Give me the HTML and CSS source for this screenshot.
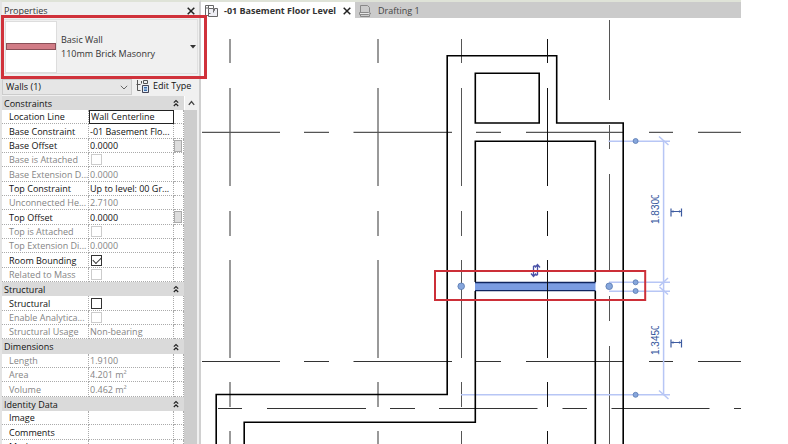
FILE: index.html
```
<!DOCTYPE html>
<html lang="en">
<head>
<meta charset="utf-8">
<title>Basement Floor Level</title>
<link rel="stylesheet" href="styles.css">
</head>
<body>
<div class="app">
  <aside class="panel">
    <header class="panel-head">
      <h1>Properties</h1>
      <button class="icon-btn" aria-label="Close properties"><svg width="8" height="8" viewBox="0 0 8 8"><path d="M.7.7l6.6 6.6M7.3.7L.7 7.3" stroke="#222" stroke-width="1.5"/></svg></button>
    </header>
    <div class="type-wrap">
      <button class="type">
        <span class="thumb"><span class="brick"></span></span>
        <span class="type-text"><span>Basic Wall</span><span>110mm Brick Masonry</span></span>
        <svg width="6" height="4" viewBox="0 0 6 4"><path d="M0 0h6L3 3.6z" fill="#333"/></svg>
      </button>
      <div class="highlight"></div>
    </div>
    <div class="filter">
      <div class="select-box">
        <select aria-label="Category"><option>Walls (1)</option></select>
        <svg width="8" height="5" viewBox="0 0 8 5"><path d="M.8.8L4 4 7.200.8" fill="none" stroke="#666"/></svg>
      </div>
      <button class="edit-type"><svg width="13" height="13" viewBox="0 0 13 13" fill="none" stroke="#555"><path d="M1.500 0v10.500h3M.5 4.500h4M5.500 1v2.500M7.500.5h4v3h-4z"/><path d="M6.500 5.500h6v7h-6z" fill="#dce8f5" stroke="#445"/><path d="M8 7.500h3M8 9h3M8 10.500h3" stroke="#3c6fae"/></svg>Edit Type</button>
    </div>
    <div class="props">
      <table>
        <colgroup><col class="c-name"><col class="c-value"><col class="c-more"></colgroup>
        <tbody>
        <tr class="group"><th colspan="3"><div>Constraints<svg class="fold" viewBox="0 0 6 8"><path d="M.8 3.700L3 1.500l2.200 2.200M.8 7L3 4.800 5.200 7"/></svg></div></th></tr>
        <tr><th><label for="p1">Location Line</label></th><td class="focus"><input id="p1" value="Wall Centerline"></td><td></td></tr>
        <tr><th><label for="p2">Base Constraint</label></th><td><input id="p2" value="-01 Basement Flo..."></td><td></td></tr>
        <tr><th><label for="p3">Base Offset</label></th><td><input id="p3" value="0.0000"></td><td><button class="more" aria-label="Associate base offset"></button></td></tr>
        <tr class="off"><th><label for="p4">Base is Attached</label></th><td><input id="p4" type="checkbox" disabled></td><td></td></tr>
        <tr class="off"><th><label for="p5">Base Extension D...</label></th><td><input id="p5" value="0.0000" disabled></td><td></td></tr>
        <tr><th><label for="p6">Top Constraint</label></th><td><input id="p6" value="Up to level: 00 Gr..."></td><td></td></tr>
        <tr class="off"><th><label for="p7">Unconnected He...</label></th><td><input id="p7" value="2.7100" disabled></td><td></td></tr>
        <tr><th><label for="p8">Top Offset</label></th><td><input id="p8" value="0.0000"></td><td><button class="more" aria-label="Associate top offset"></button></td></tr>
        <tr class="off"><th><label for="p9">Top is Attached</label></th><td><input id="p9" type="checkbox" disabled></td><td></td></tr>
        <tr class="off"><th><label for="p10">Top Extension Di...</label></th><td><input id="p10" value="0.0000" disabled></td><td></td></tr>
        <tr><th><label for="p11">Room Bounding</label></th><td><input id="p11" type="checkbox" checked></td><td></td></tr>
        <tr class="off"><th><label for="p12">Related to Mass</label></th><td><input id="p12" type="checkbox" disabled></td><td></td></tr>
        <tr class="group"><th colspan="3"><div>Structural<svg class="fold" viewBox="0 0 6 8"><path d="M.8 3.700L3 1.500l2.200 2.200M.8 7L3 4.800 5.200 7"/></svg></div></th></tr>
        <tr><th><label for="p13">Structural</label></th><td><input id="p13" type="checkbox"></td><td></td></tr>
        <tr class="off"><th><label for="p14">Enable Analytica...</label></th><td><input id="p14" type="checkbox" disabled></td><td></td></tr>
        <tr class="off"><th><label for="p15">Structural Usage</label></th><td><input id="p15" value="Non-bearing" disabled></td><td></td></tr>
        <tr class="group"><th colspan="3"><div>Dimensions<svg class="fold" viewBox="0 0 6 8"><path d="M.8 3.700L3 1.500l2.200 2.200M.8 7L3 4.800 5.200 7"/></svg></div></th></tr>
        <tr class="off"><th><label for="p16">Length</label></th><td><input id="p16" value="1.9100" disabled></td><td></td></tr>
        <tr class="off"><th><label for="p17">Area</label></th><td><input id="p17" value="4.201 m²" disabled></td><td></td></tr>
        <tr class="off"><th><label for="p18">Volume</label></th><td><input id="p18" value="0.462 m²" disabled></td><td></td></tr>
        <tr class="group"><th colspan="3"><div>Identity Data<svg class="fold" viewBox="0 0 6 8"><path d="M.8 3.700L3 1.500l2.200 2.200M.8 7L3 4.800 5.200 7"/></svg></div></th></tr>
        <tr><th><label for="p19">Image</label></th><td><input id="p19"></td><td></td></tr>
        <tr><th><label for="p20">Comments</label></th><td><input id="p20"></td><td></td></tr>
        <tr><th><label for="p21">Mark</label></th><td><input id="p21"></td><td></td></tr>
        </tbody>
      </table>
      <div class="scroll">
        <button class="icon-btn" aria-label="Scroll up"><svg width="7" height="6" viewBox="0 0 7 6"><path d="M.8 4.800L3.500 1.500l2.700 3.300" fill="none" stroke="#444" stroke-width="1.300"/></svg></button>
        <div class="thumb-bar"></div>
      </div>
    </div>
  </aside>
  <main class="view">
    <nav class="tabs">
      <a class="tab active" href="#plan"><svg width="13" height="12" viewBox="0 0 13 12" fill="none" stroke="#666"><path d="M3.500 10.500h-3v-10h8v3M.5 3h3M3.500.5v3"/><path d="M3.500 3.500h5v2h1v-2h3v8h-9z" fill="#eeeef4"/><path d="M8.500 5.500v2M3.500 8.500h2"/></svg><span>-01 Basement Floor Level</span></a>
      <button class="icon-btn" aria-label="Close tab"><svg width="8" height="8" viewBox="0 0 8 8"><path d="M.7.7l6.600 6.600M7.300.7L.7 7.300" stroke="#222" stroke-width="1.500"/></svg></button>
      <a class="tab" href="#drafting"><svg width="13" height="12" viewBox="0 0 13 12" fill="none" stroke="#888"><path d="M1.500 7V.5h7l2 2V7M1.500 9v2.500h9V10"/><path d="M.5 7.500h9l2.500 1-2.500 1h-9z" fill="#e6e6e6"/></svg><span>Drafting 1</span></a>
    </nav>
    <svg class="plan" viewBox="201 19 587 425" preserveAspectRatio="xMinYMin meet" role="img" aria-label="Basement floor plan">
      <defs>
        <clipPath id="dimA"><rect x="645" y="195" width="20" height="40"/></clipPath>
        <clipPath id="dimB"><rect x="645" y="326" width="20" height="40"/></clipPath>
        <path id="grid-v" d="M0 39V63M0 88V186M0 211V236M0 260V358M0 382V407M0 431V444"/>
        <path id="grid-h" d="M202 0H280M304 0H329M353.500 0H452M476 0H501M526 0H623M649 0H673M698 0H741"/>
        <path id="dim-mark" d="M671 208.500V216.500M681.500 208.500V216.500M671 211.500H681.500M673 210.500v2M679.500 210.500v2"/>
      </defs>
      <g fill="none">
        <g stroke="#999" stroke-width="2"><use href="#grid-v" x="230"/><use href="#grid-v" x="378"/></g>
        <g stroke="#555"><use href="#grid-v" x="461.500"/><path d="M609.500 20V100M609.500 125V149M609.500 174V271M609.500 296V321M609.500 346V444"/></g>
        <g stroke="#333"><use href="#grid-h" y="361.500"/><path d="M218 408.500H242M267 408.500H366M390 408.500H415M439 408.500H537.500M562.500 408.500H587M611.500 408.500H709.500M734 408.500H741"/></g>
        <use href="#grid-h" y="132.300" stroke="#555" stroke-width="1.300"/>
        <path d="M475 282h120.500v9H475z" fill="#7b9ce2"/>
        <g stroke="#b7c6f5" stroke-width="1.500"><path d="M608.500 141.200H670M609 282.300H670M609 291.200H670M461 394.800H670M663.600 141V395"/><path d="M659 136.500l9.500 8.500M659.500 286l8.500-8M659.500 287l8.500 7.500M659 390.500l9.500 8.500"/></g>
        <g stroke="#000" stroke-width="1.600"><path d="M216.200 444V394.500H447.200V55.800H556.700V123H623.200V444"/><path d="M475.300 73.300H539.200V123H475.300z"/><path d="M475.300 282V141.300H595.300V282M475.300 291V422.300H244.200V444M595.300 291V444"/></g>
        <path d="M475 282.500H595.500M475 290.700H595.500" stroke="#10255f" stroke-width="1.300"/>
        <use href="#grid-v" x="547.500" stroke="#111"/>
        <g fill="#86a6dc" stroke="#5878b0" stroke-width=".8"><circle cx="461.200" cy="286.300" r="3.300"/><circle cx="609.200" cy="286.300" r="3.300"/><circle cx="635.600" cy="141" r="2.500"/><circle cx="635.600" cy="282.300" r="2.500"/><circle cx="635.600" cy="291" r="2.500"/><circle cx="635.600" cy="394.800" r="2.500"/></g>
        <g stroke="#3d5ba0" stroke-width="1.200"><use href="#dim-mark"/><use href="#dim-mark" y="131"/></g>
        <path d="M533.500 266V276.500M531 273.500l2.500 3 2.500-3M537.500 275V264.500M535 267.500l2.500-3 2.500 3M533.500 266h2M535.500 275h2" stroke="#4a52a8" stroke-width="1.300"/>
        <path d="M435 271H645.200V300H435z" stroke="#cc2f38" stroke-width="2"/>
      </g>
      <g class="dim-text">
        <g clip-path="url(#dimA)"><text transform="translate(659 224) rotate(-90)">1.8300</text></g>
        <g clip-path="url(#dimB)"><text transform="translate(659 355) rotate(-90)">1.3450</text></g>
      </g>
    </svg>
  </main>
</div>
</body>
</html>
```
FILE: styles.css
```
* { box-sizing: border-box; }
body {
  margin: 0;
  background: #fff;
  color: #111;
  font: 9px/14px "Open Sans", "Noto Sans", sans-serif;
}
button, input, select { font: inherit; color: inherit; margin: 0; padding: 0; border: 0; background: none; }
svg { flex: none; }
.app { display: flex; height: 100vh; overflow: hidden; }

.panel {
  display: flex;
  flex-direction: column;
  width: 201px;
  flex: none;
  background: #f0f0f0;
  border-top: 2px solid #dfe3d8;
  border-left: 2px solid #e4e4e4;
  border-right: 2px solid #d0d0d0;
}
.panel-head { display: flex; align-items: center; justify-content: space-between; height: 16px; padding: 2px 4px 0 2px; }
h1 { margin: 0; font: inherit; color: #333; }
.icon-btn { display: flex; align-items: center; justify-content: center; }
.type-wrap { position: relative; height: 61px; padding: 1px 1px 5px 1px; }
.type {
  display: flex;
  align-items: center;
  gap: 4px;
  width: 100%;
  height: 55px;
  padding: 0 1px;
  border: 1px solid #e0e0e0;
  color: #333;
  text-align: left;
}
.thumb { display: flex; align-items: center; width: 52px; height: 52px; background: #fff; border: 1px solid #ddd; }
.brick { width: 100%; height: 7px; background: #d17c86; border: 1px solid #8a5058; }
.type-text { display: flex; flex-direction: column; flex: 1; white-space: nowrap; }
.highlight { position: absolute; top: -3px; left: -1px; right: -8px; bottom: 0; border: 3px solid #d0323b; pointer-events: none; z-index: 1; }

.filter { display: flex; align-items: flex-start; height: 17px; gap: 4px; }
.select-box { position: relative; width: 130px; height: 16px; background: #e6e6e6; border: 1px solid #ccc; }
.select-box select { display: block; appearance: none; width: 100%; height: 14px; padding-left: 3px; line-height: 14px; }
.select-box svg { position: absolute; right: 3px; top: 5px; pointer-events: none; }
.edit-type { display: flex; align-items: center; gap: 4px; white-space: nowrap; }

.props { display: flex; flex: 1; min-height: 0; overflow: hidden; align-items: flex-start; }
table { width: 182px; flex: none; table-layout: fixed; border-collapse: separate; border-spacing: 0; background: #fff; }
.c-name { width: 87px; }
.c-value { width: 85px; }
.c-more { width: 10px; }
tr { height: 14px; }
tr:nth-child(3n) { height: 15px; }
th, td { height: inherit; padding: 0; border-right: 1px dotted #aaa; border-bottom: 1px dotted #aaa; font-weight: normal; text-align: left; white-space: nowrap; line-height: 13px; overflow: hidden; }
th { padding-left: 7px; }
th label, td input, td button { display: block; }
td input { width: 100%; height: 13px; padding-left: 1px; line-height: 13px; }
.off { color: #858585; }
.group th { padding: 0 5px 0 2px; background: #dadada; border: 0; }
.group div { display: flex; align-items: center; justify-content: space-between; }
.fold { width: 6px; height: 8px; fill: none; stroke: #222; stroke-width: 1.200; }
.focus { border: 1px solid #222; }
.focus input { height: 12px; line-height: 12px; }
input[type="checkbox"] { appearance: none; width: 11px; height: 11px; margin-left: 2px; padding: 0; border: 1px solid #333; background: #fff; }
input[type="checkbox"]:disabled { border-color: #ccc; }
input[type="checkbox"]:checked::after { content: ""; display: block; width: 7px; height: 4px; margin: 1px; border: solid #333; border-width: 0 0 1px 1px; transform: rotate(-45deg); }
.more { width: 8px; height: 12px; background: #ddd; border: 1px solid #aaa; }
.scroll { display: flex; flex-direction: column; flex: 1; align-self: stretch; padding-right: 2px; }
.scroll .icon-btn { height: 14px; border-left: 1px solid #fff; }
.thumb-bar { flex: 1; background: #cdcdcd; }

.view { display: flex; flex-direction: column; flex: 1; min-width: 0; }
.tabs { display: flex; height: 19px; margin-right: 47px; background: #cbcbcb; border-top: 2px solid #dfe3d8; border-bottom: 1px solid #fff; }
.tabs > * { background: #fff; padding-top: 1px; }
.tab { display: flex; align-items: center; gap: 6px; padding-left: 4px; color: #444; text-decoration: none; white-space: nowrap; }
.tab:last-child { background: none; }
.tab.active { width: 138px; color: #333; font-weight: 700; }
.tabs .icon-btn { width: 16px; }
.plan { display: block; width: 100%; }
.dim-text { font: 10px "Liberation Sans", sans-serif; fill: #34559c; }
```
